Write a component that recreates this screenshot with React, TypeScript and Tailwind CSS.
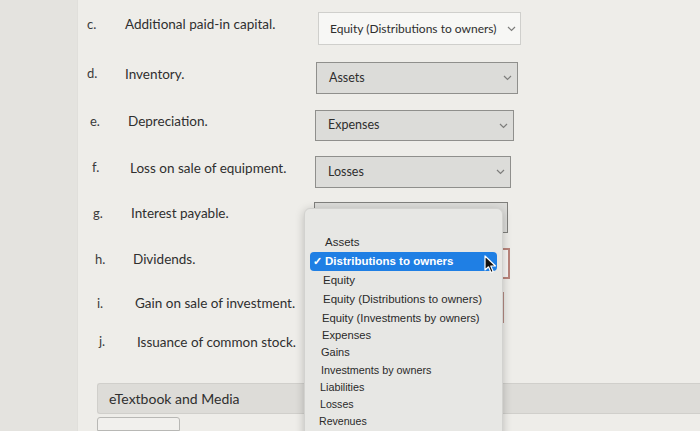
import React from 'react';

function Chevron({ cls }: { cls: string }) {
  return (
    <svg width="9" height="6" viewBox="0 0 9 6" className={cls}>
      <path d="M1 1 L4.5 4.5 L8 1" fill="none" stroke="#7d7d7b" strokeWidth="1.2" />
    </svg>
  );
}

function Row({
  letter,
  text,
  rowCls,
  textCls,
  children,
}: {
  letter: string;
  text: string;
  rowCls: string;
  textCls: string;
  children: React.ReactNode;
}) {
  return (
    <div className={`flex items-center ${rowCls}`}>
      <div className="w-[38px] shrink-0 -mt-[8px] text-[13px] text-[#3b3b3b]">{letter}</div>
      <div className={`${textCls} shrink-0 -mt-[8px] text-[13.5px] text-[#2f2f2f]`}>{text}</div>
      {children}
    </div>
  );
}

const menuItems = [
  { t: 'Equity', cls: 'h-[19px] pl-[18px] text-[11.5px]' },
  { t: 'Equity (Distributions to owners)', cls: 'h-[19px] pl-[18px] text-[11.5px]' },
  { t: 'Equity (Investments by owners)', cls: 'h-[18px] pl-[17px] text-[11.3px]' },
  { t: 'Expenses', cls: 'h-[17px] pl-[17px] text-[11.2px]' },
  { t: 'Gains', cls: 'h-[17px] pl-[16px] text-[11px]' },
  { t: 'Investments by owners', cls: 'h-[18px] pl-[16px] text-[10.8px]' },
  { t: 'Liabilities', cls: 'h-[17px] pl-[15px] text-[10.8px]' },
  { t: 'Losses', cls: 'h-[17px] pl-[15px] text-[10.6px]' },
  { t: 'Revenues', cls: 'h-[17px] pl-[14px] text-[10.6px]' },
];

export default function App() {
  const lato = { fontFamily: 'Lato, "Open Sans", sans-serif' };
  return (
    <div
      className="relative w-[700px] h-[431px] overflow-hidden flex bg-[#eeede9]"
      style={lato}
    >
      <div className="w-[78px] shrink-0 bg-[#e4e3df] border-r border-[#e0dfdb]" />
      <div className="flex-1 flex flex-col">
        <Row letter="c." text="Additional paid-in capital." rowCls="mt-[12px] pl-[9px]" textCls="w-[193px]">
          <div className="w-[203px] h-[33px] bg-[#f7f7f5] border border-[#cfcfcc] flex items-center justify-between pl-[11px] pr-[4px] text-[12px] text-[#2e2e2e]">
            <span>Equity (Distributions to owners)</span>
            <Chevron cls="" />
          </div>
        </Row>
        <Row letter="d." text="Inventory." rowCls="mt-[17px] pl-[9px]" textCls="w-[191px]">
          <div className="w-[202px] h-[32px] bg-[#dcdcd9] border border-[#8f8f8c] flex items-center justify-between pl-[12px] pr-[5px] text-[12.5px] text-[#2e2e2e]">
            <span>Assets</span>
            <Chevron cls="" />
          </div>
        </Row>
        <Row letter="e." text="Depreciation." rowCls="mt-[16px] pl-[12px]" textCls="w-[187px]">
          <div className="w-[199px] h-[31px] bg-[#dcdcd9] border border-[#8f8f8c] flex items-center justify-between pl-[12px] pr-[5px] text-[12.5px] text-[#2e2e2e]">
            <span>Expenses</span>
            <Chevron cls="" />
          </div>
        </Row>
        <Row letter="f." text="Loss on sale of equipment." rowCls="mt-[15px] pl-[14px]" textCls="w-[185px]">
          <div className="w-[196px] h-[32px] bg-[#dcdcd9] border border-[#8f8f8c] flex items-center justify-between pl-[12px] pr-[5px] text-[12.5px] text-[#2e2e2e]">
            <span>Losses</span>
            <Chevron cls="" />
          </div>
        </Row>
        <Row letter="g." text="Interest payable." rowCls="mt-[14px] pl-[15px]" textCls="w-[183px]">
          <div className="w-[194px] h-[31px] bg-[#dcdcd9] border border-[#7f7f7c]" />
        </Row>
        <Row letter="h." text="Dividends." rowCls="mt-[15px] pl-[17px]" textCls="w-[179px]">
          <div className="w-[198px] h-[31px] bg-[#f6f5f3] border-2 border-[#b9857c]" />
        </Row>
        <Row letter="i." text="Gain on sale of investment." rowCls="mt-[13px] pl-[19px]" textCls="w-[175px]">
          <div className="w-[194px] h-[31px] bg-[#f6f5f3] border-2 border-[#b48a82]" />
        </Row>
        <Row letter="j." text="Issuance of common stock." rowCls="mt-[8px] pl-[21px]" textCls="w-[173px]">
          <div className="w-[189px] h-[30px] bg-[#e2e1dd] border-r-2 border-[#5e5e5c]" />
        </Row>
        <div className="mt-[22px] ml-[19px] h-[34px] bg-[#dddcd8] border-t border-b border-l border-[#d0cfcb] rounded-l-[3px] flex items-center pl-[11px] text-[14px] text-[#2f2f2f]">
          eTextbook and Media
        </div>
        <div className="mt-[3px] ml-[19px] w-[83px] h-[16px] bg-[#f1f0ed] border border-[#b8b8b5] rounded-t-[3px]" />
      </div>

      {/* Dropdown menu overlay */}
      <div
        className="absolute left-[304px] top-[208px] w-[199px] h-[240px] bg-[#e7e7e4] rounded-[6px] shadow-[0_2px_10px_rgba(0,0,0,0.22)] border border-[#d2d2cf] pt-[24px] text-[#2a2a2a]"
        style={{ fontFamily: '"Liberation Sans", Arial, sans-serif' }}
      >
        <div className="h-[19px] flex items-center pl-[20px] text-[11.5px]">Assets</div>
        <div className="mx-[5px] h-[19px] flex items-center rounded-[4px] bg-[#1f7fe4] text-white text-[11.5px] font-semibold pl-[3px]">
          <span className="w-[12px] text-[11px]">✓</span>
          <span>Distributions to owners</span>
        </div>
        {menuItems.map((m) => (
          <div key={m.t} className={`flex items-center ${m.cls}`}>
            {m.t}
          </div>
        ))}
      </div>

      {/* Mouse pointer */}
      <svg
        className="absolute left-[484px] top-[255px]"
        width="13"
        height="19"
        viewBox="0 0 13 19"
      >
        <path
          d="M1 1 L1 15 L4.5 11.8 L7 17.5 L9.2 16.5 L6.8 11 L11.5 11 Z"
          fill="#111"
          stroke="#fff"
          strokeWidth="1.2"
          strokeLinejoin="round"
        />
      </svg>
    </div>
  );
}
